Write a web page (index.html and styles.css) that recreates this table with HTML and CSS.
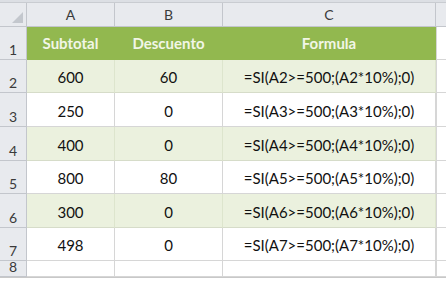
FILE: index.html
```html
<!DOCTYPE html>
<html>
<head>
<meta charset="utf-8">
<link rel="stylesheet" href="styles.css">
</head>
<body>
<div class="topband"></div>
<div class="sheet">
  <div class="corner"><span class="tri"></span></div>
  <div class="colhead">A</div>
  <div class="colhead">B</div>
  <div class="colhead">C</div>
  <div class="colhead last"></div>

  <div class="rowhead">1</div>
  <div class="cell head">Subtotal</div>
  <div class="cell head">Descuento</div>
  <div class="cell head">Formula</div>
  <div class="cell blank"></div>

  <div class="rowhead">2</div>
  <div class="cell band">600</div>
  <div class="cell band">60</div>
  <div class="cell band">=SI(A2&gt;=500;(A2*10%);0)</div>
  <div class="cell blank"></div>

  <div class="rowhead">3</div>
  <div class="cell">250</div>
  <div class="cell">0</div>
  <div class="cell">=SI(A3&gt;=500;(A3*10%);0)</div>
  <div class="cell blank"></div>

  <div class="rowhead">4</div>
  <div class="cell band">400</div>
  <div class="cell band">0</div>
  <div class="cell band">=SI(A4&gt;=500;(A4*10%);0)</div>
  <div class="cell blank"></div>

  <div class="rowhead">5</div>
  <div class="cell">800</div>
  <div class="cell">80</div>
  <div class="cell">=SI(A5&gt;=500;(A5*10%);0)</div>
  <div class="cell blank"></div>

  <div class="rowhead">6</div>
  <div class="cell band">300</div>
  <div class="cell band">0</div>
  <div class="cell band">=SI(A6&gt;=500;(A6*10%);0)</div>
  <div class="cell blank"></div>

  <div class="rowhead">7</div>
  <div class="cell">498</div>
  <div class="cell">0</div>
  <div class="cell">=SI(A7&gt;=500;(A7*10%);0)</div>
  <div class="cell blank"></div>

  <div class="rowhead">8</div>
  <div class="cell"></div>
  <div class="cell"></div>
  <div class="cell"></div>
  <div class="cell blank"></div>
</div>
</body>
</html>
```
FILE: styles.css
```css
* { box-sizing: border-box; }
html, body {
  margin: 0;
  padding: 0;
  background: #ffffff;
  width: 446px;
  height: 284px;
  overflow: hidden;
  font-family: Lato, "Open Sans", sans-serif;
}
.topband {
  height: 3px;
  background: #dcdfe4;
  border-bottom: 1px solid #c9ccd1;
}
.sheet {
  display: grid;
  grid-template-columns: 27px 88px 108px 213px 10px;
  grid-template-rows: 24px 33px 33px 34px 34px 33px 34px 33px 16px;
  border-bottom: 1px solid #c8c8c8;
}
.corner {
  background: #e8eaee;
  border-right: 1px solid #c3c6cc;
  border-bottom: 1px solid #c3c6cc;
  position: relative;
}
.tri {
  position: absolute;
  right: 3px;
  bottom: 3px;
  width: 0;
  height: 0;
  border-left: 11px solid transparent;
  border-bottom: 11px solid #c3c7cd;
}
.colhead {
  background: #e8eaee;
  border-right: 1px solid #c3c6cc;
  border-bottom: 1px solid #c3c6cc;
  display: flex;
  align-items: center;
  justify-content: center;
  font-size: 14px;
  color: #3a3a3a;
}
.colhead.last { border-right: none; }
.rowhead {
  background: #e8eaee;
  border-right: 1px solid #c3c6cc;
  border-bottom: 1px solid #c3c6cc;
  display: flex;
  align-items: flex-end;
  justify-content: center;
  padding-bottom: 1px;
  font-size: 14px;
  color: #3a3a3a;
}
.cell {
  border-right: 1px solid #d6d6d6;
  border-bottom: 1px solid #d6d6d6;
  display: flex;
  align-items: center;
  justify-content: center;
  padding-top: 2px;
  font-size: 15px;
  color: #111111;
  white-space: nowrap;
}
.cell.head {
  background: #92b84f;
  border-color: #92b84f;
  color: #f1f6e6;
  font-weight: bold;
  padding-top: 0;
}
.cell.band {
  background: #ebf1de;
  border-right-color: #dde5cd;
  border-bottom-color: #d6dcc9;
}
.cell.blank {
  border-right: none;
  border-left: 1px solid #d6d6d6;
}
```
